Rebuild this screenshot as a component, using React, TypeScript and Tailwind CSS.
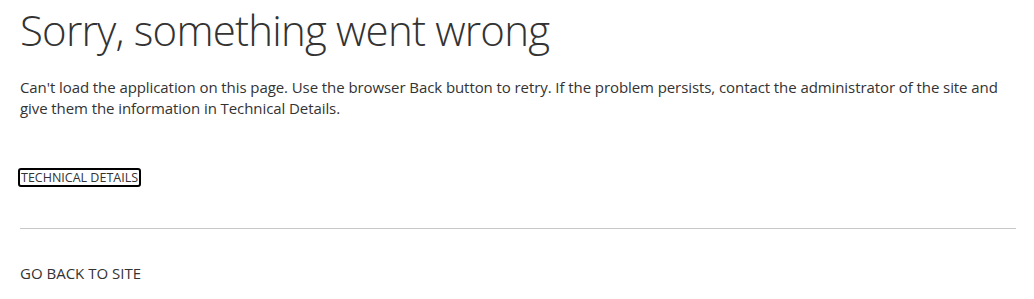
const App = () => {
  return (
    <div className="min-h-screen bg-white px-5 pr-[18px] text-[#333333] font-['Open_Sans',sans-serif]">
      <h1 className="pt-[4px] text-[42px] font-light leading-[52px] tracking-[-0.8px]">
        Sorry, something went wrong
      </h1>
      <p className="mt-[21px] text-[15px] leading-[21px] tracking-[-0.08px]">
        Can't load the application on this page. Use the browser Back button to retry. If the problem
        persists, contact the administrator of the site and give them the information in Technical Details.
      </p>
      <div className="mt-[45px]">
        <button className="-ml-[2px] rounded-[3px] border-2 border-black px-[1px] text-[12.5px] leading-[15px] text-[#333333]">
          TECHNICAL DETAILS
        </button>
      </div>
      <hr className="mt-[40px] border-t border-[#c8c8c8]" />
      <div className="mt-[32px]">
        <a className="text-[15px] leading-[20px] text-[#333333]">GO BACK TO SITE</a>
      </div>
    </div>
  );
};

export default App;
